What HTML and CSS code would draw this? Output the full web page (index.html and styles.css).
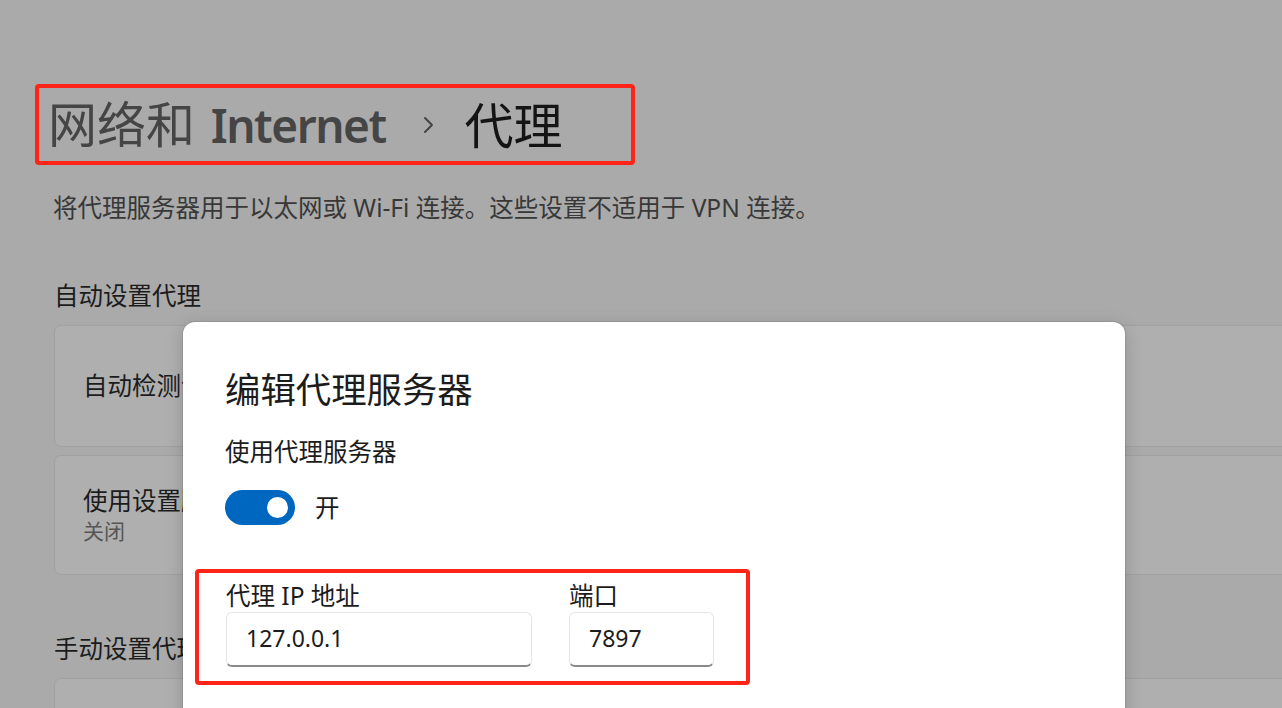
FILE: index.html
```html
<!DOCTYPE html>
<html lang="zh-CN">
<head>
<meta charset="utf-8">
<title>代理</title>
<link rel="stylesheet" href="styles.css">
</head>
<body>
<div class="page">
  <div class="title-mark">
    <h1 class="title">
      <span class="crumb">网络和 <span class="latin">Internet</span></span>
      <svg class="chev" width="12" height="20" viewBox="0 0 12 20"><polyline points="3,3 10,10 3,17" fill="none" stroke="#454545" stroke-width="2" stroke-linecap="round" stroke-linejoin="round"/></svg>
      <span class="current">代理</span>
    </h1>
  </div>
  <p class="subtitle">将代理服务器用于以太网或 Wi-Fi 连接。这些设置不适用于 VPN 连接。</p>

  <h2 class="section">自动设置代理</h2>
  <div class="cards">
    <div class="card card-single"><span class="card-title">自动检测设置</span></div>
    <div class="card card-double"><span class="card-title">使用设置脚本</span><span class="card-sub">关闭</span></div>
  </div>

  <h2 class="section section-2">手动设置代理</h2>
  <div class="cards">
    <div class="card card-tall"></div>
  </div>
</div>

<div class="dialog">
  <h3 class="dialog-title">编辑代理服务器</h3>
  <div class="dialog-label">使用代理服务器</div>
  <div class="toggle-row">
    <span class="toggle"><span class="knob"></span></span>
    <span class="toggle-text">开</span>
  </div>
  <div class="fields-mark">
    <div class="field field-ip">
      <label class="field-label">代理 IP 地址</label>
      <div class="input">127.0.0.1</div>
    </div>
    <div class="field field-port">
      <label class="field-label">端口</label>
      <div class="input">7897</div>
    </div>
  </div>
</div>
</body>
</html>
```

FILE: styles.css
```css
html, body {
  margin: 0;
  padding: 0;
}
body {
  width: 1282px;
  height: 708px;
  overflow: hidden;
  background: #aaaaaa;
  font-family: "Segoe UI", "Noto Sans", "Noto Sans CJK SC", sans-serif;
  color: #1c1c1c;
  position: relative;
}
.page {
  padding-top: 84px;
  padding-left: 54px;
}
.title-mark {
  margin-left: -19px;
  width: 600px;
  height: 81px;
  box-sizing: border-box;
  border: 4px solid #ff2418;
  border-radius: 4px;
  padding-left: 9px;
  display: flex;
  align-items: center;
}
.title {
  margin: 0;
  font-size: 49px;
  font-weight: 400;
  line-height: 66px;
  display: flex;
  align-items: center;
  white-space: nowrap;
}
.crumb {
  color: #454545;
}
.latin {
  font-size: 46px;
  font-weight: 600;
  letter-spacing: -1.5px;
  margin-left: 3px;
}
.chev {
  margin: 0 31px 0 36px;
}
.current {
  color: #141414;
}
.subtitle {
  margin: 26px 0 0 -1px;
  font-size: 24.5px;
  line-height: 34px;
  color: #383838;
}
.section {
  margin: 54px 0 0 0;
  font-size: 24.5px;
  font-weight: 400;
  line-height: 34px;
  color: #1c1c1c;
}
.section-2 {
  margin-top: 57px;
}
.cards {
  margin-top: 12px;
  display: flex;
  flex-direction: column;
  gap: 8px;
  width: 1260px;
}
.card {
  background: #afafaf;
  border: 1px solid #a1a1a1;
  border-radius: 7px;
  box-sizing: border-box;
  padding-left: 28px;
  display: flex;
  flex-direction: column;
  justify-content: center;
}
.card-single {
  height: 122px;
}
.card-double {
  height: 120px;
}
.card-tall {
  height: 120px;
}
.card-title {
  font-size: 24.5px;
  line-height: 32px;
  color: #1c1c1c;
}
.card-sub {
  font-size: 21px;
  line-height: 28px;
  color: #565656;
}

.dialog {
  position: absolute;
  left: 183px;
  top: 322px;
  width: 942px;
  height: 500px;
  box-sizing: border-box;
  background: #ffffff;
  border-radius: 12px;
  box-shadow: 0 0 0 1px rgba(0,0,0,0.08), 0 4px 18px rgba(0,0,0,0.18);
  padding: 44px 42px 0 42px;
}
.dialog-title {
  margin: 0;
  font-size: 35.4px;
  font-weight: 400;
  line-height: 46px;
  color: #1c1c1c;
}
.dialog-label {
  margin-top: 23px;
  font-size: 24.5px;
  line-height: 34px;
  color: #1c1c1c;
}
.toggle-row {
  margin-top: 21px;
  display: flex;
  align-items: center;
  gap: 20px;
}
.toggle {
  width: 70px;
  height: 35px;
  border-radius: 18px;
  background: #0067c0;
  display: flex;
  align-items: center;
  justify-content: flex-end;
  padding-right: 7px;
  box-sizing: border-box;
}
.knob {
  width: 21px;
  height: 21px;
  border-radius: 50%;
  background: #ffffff;
}
.toggle-text {
  font-size: 24.5px;
  line-height: 34px;
  color: #1c1c1c;
}
.fields-mark {
  margin-top: 44px;
  margin-left: -30px;
  width: 555px;
  box-sizing: border-box;
  border: 4px solid #ff2418;
  border-radius: 4px;
  padding: 6px 0 14px 27px;
  display: flex;
  gap: 37px;
}
.field {
  display: flex;
  flex-direction: column;
}
.field-label {
  font-size: 24.5px;
  line-height: 33px;
  color: #1c1c1c;
}
.input {
  box-sizing: border-box;
  height: 55px;
  background: #ffffff;
  border: 1px solid #e6e6e6;
  border-bottom: 2px solid #8a8a8a;
  border-radius: 6px;
  padding-left: 19px;
  font-size: 23px;
  line-height: 50px;
  color: #1c1c1c;
}
.field-ip .input {
  width: 306px;
}
.field-port .input {
  width: 145px;
}
```
